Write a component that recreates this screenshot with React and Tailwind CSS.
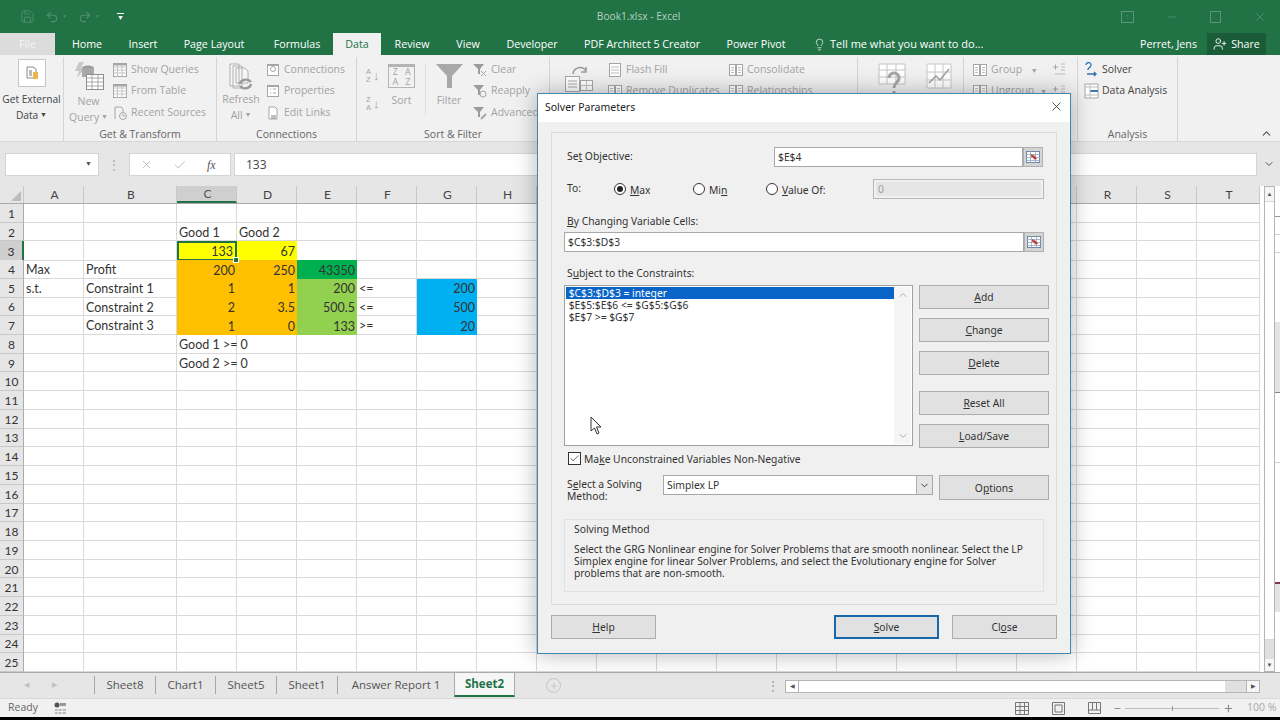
import React from "react";
import { Save, Undo2, Redo2, Lightbulb, X, Check, UserPlus, ChevronUp, ChevronDown, Plus, Minus } from "lucide-react";

const colWidths = "grid-cols-[24px_60px_93px_60px_60px_60px_60px_60px_60px_60px_60px_60px_60px_60px_60px_60px_60px_60px_60px_60px_63px]";
const colNames = ["A", "B", "C", "D", "E", "F", "G", "H", "I", "J", "K", "L", "M", "N", "O", "P", "Q", "R", "S", "T"];
const rowNums = Array.from({ length: 25 }, (_, i) => i + 1);

// row -> col -> [text, align, fill]
const cells = {
    2: { C: ["Good 1"], D: ["Good 2"] },
    3: { C: ["133", "r", "bg-[#ffff00]"], D: ["67", "r", "bg-[#ffff00]"] },
    4: { A: ["Max"], B: ["Profit"], C: ["200", "r", "bg-[#ffc000]"], D: ["250", "r", "bg-[#ffc000]"], E: ["43350", "r", "bg-[#00b050]"] },
    5: { A: ["s.t."], B: ["Constraint 1"], C: ["1", "r", "bg-[#ffc000]"], D: ["1", "r", "bg-[#ffc000]"], E: ["200", "r", "bg-[#92d050]"], F: ["<="], G: ["200", "r", "bg-[#00b0f0]"] },
    6: { B: ["Constraint 2"], C: ["2", "r", "bg-[#ffc000]"], D: ["3.5", "r", "bg-[#ffc000]"], E: ["500.5", "r", "bg-[#92d050]"], F: ["<="], G: ["500", "r", "bg-[#00b0f0]"] },
    7: { B: ["Constraint 3"], C: ["1", "r", "bg-[#ffc000]"], D: ["0", "r", "bg-[#ffc000]"], E: ["133", "r", "bg-[#92d050]"], F: [">="], G: ["20", "r", "bg-[#00b0f0]"] },
    8: { C: ["Good 1 >= 0"] },
    9: { C: ["Good 2 >= 0"] },
};

const tabs = [
    ["Home", "w-[64px]"],
    ["Insert", "w-[48px]"],
    ["Page Layout", "w-[94px]"],
    ["Formulas", "w-[72px]"],
    ["Data", "w-[48px]"],
    ["Review", "w-[62px]"],
    ["View", "w-[50px]"],
    ["Developer", "w-[78px]"],
    ["PDF Architect 5 Creator", "w-[142px]"],
    ["Power Pivot", "w-[86px]"],
];

const sheetTabs = [
    ["Sheet8", "w-[61px]"],
    ["Chart1", "w-[60px]"],
    ["Sheet5", "w-[61px]"],
    ["Sheet1", "w-[61px]"],
    ["Answer Report 1", "w-[117px]"],
];

function Ico({ w = 16, h = 16, vb, children, className = "" }) {
    return (
        <svg width={w} height={h} viewBox={vb || `0 0 ${w} ${h}`} fill="none" stroke="#a6a6a6" strokeWidth="1" className={`shrink-0 ${className}`}>
            {children}
        </svg>
    );
}

const TableIco = () => (
    <Ico>
        <rect x="1.5" y="1.5" width="13" height="13" fill="#fff" />
        <path d="M1.5 5h13M1.5 8h13M1.5 11h13M5.5 2v13M10 2v13" stroke="#c4c4c4" />
        <path d="M1.5 2.5h13" strokeWidth="2" />
    </Ico>
);
const ClockIco = () => (
    <Ico>
        <path d="M3 14V2h6l2 2v3" />
        <circle cx="11" cy="11" r="3.5" fill="#f1f1f1" />
        <path d="M11 9v2h2" />
    </Ico>
);
const PageIco = ({ dots }) => (
    <Ico>
        <rect x="2.5" y="2.5" width="11" height="11" fill="#fff" />
        {dots ? <path d="M5 6h1M8 6h3M5 10h1M8 10h3" /> : <circle cx="8" cy="7" r="2.5" />}
        <path d="M2.5 3.5h11" />
    </Ico>
);
const LinkIco = () => (
    <Ico>
        <path d="M4 14V2h6l2 2v10z" fill="#fff" />
        <path d="M6 11h5M6 13h5" strokeWidth="1.4" />
    </Ico>
);
const FunnelSmall = ({ children }) => (
    <Ico>
        <path d="M1 2h11L8 7v5H6V7z" fill="#9c9c9c" stroke="none" />
        {children}
    </Ico>
);
const SmallDoc = () => (
    <Ico>
        <rect x="2.5" y="1.5" width="11" height="13" fill="#fff" />
        <path d="M4 5h8M4 8h8M4 11h8" stroke="#bdbdbd" />
    </Ico>
);
const SplitIco = () => (
    <Ico>
        <rect x="1.500" y="2.500" width="6" height="11" fill="#fff" />
        <rect x="8.500" y="2.500" width="6" height="11" fill="#fff" />
        <path d="M3 5.500h3M3 8h3M3 10.500h3M10 5.500h3M10 8h3M10 10.500h3" stroke="#bdbdbd" />
    </Ico>
);
const OutlineSide = () => (
    <Ico>
        <path d="M2 5h5M4.500 2.500v5" />
        <path d="M10 2h4M10 5h4M10 8h4M4 12h10" stroke="#bdbdbd" />
    </Ico>
);

function SmallItem({ icon, children, className = "" }) {
    return (
        <div className={`h-[21.5px] flex items-center gap-[3px] whitespace-nowrap text-[#a3a3a3] ${className}`}>
            {icon}
            <span>{children}</span>
        </div>
    );
}

function BigLabel({ a, b, caret, dark }) {
    return (
        <div className={`text-center leading-[15px] ${dark ? "text-[#444444] text-[10.2px]" : "text-[#a3a3a3]"}`}>
            <div>{a}</div>
            <div>{b}{caret && <span className="text-[7px] align-[2px]"> ▼</span>}</div>
        </div>
    );
}

function Group({ width, label, children, noBorder }) {
    return (
        <div className={`${width} h-[85px] mt-[2px] shrink-0 flex flex-col ${noBorder ? "" : "border-r border-[#d4d4d4]"}`}>
            <div className="flex-1 flex min-h-0">{children}</div>
            {label && <div className="text-center text-[#666666] text-[10.5px] leading-[14px] pb-[1px]">{label}</div>}
        </div>
    );
}

function Ribbon() {
    return (
        <div className="h-[87px] shrink-0 bg-[#f1f1f1] border-b border-[#d8d8d8] flex text-[10.5px] font-['Open_Sans',sans-serif] relative">
            <Group width="w-[64px]">
                <div className="w-full flex flex-col items-center pt-[2px]">
                    <div className="w-[28px] h-[28px] bg-white border border-[#c6c6c6] flex items-center justify-center">
                        <svg width="16" height="16" viewBox="0 0 16 16">
                            <path d="M3 2h6l3 2v9H3z" fill="#fff" stroke="#8a8a8a" />
                            <path d="M5 6h3M5 8h3M5 10h3" stroke="#777" />
                            <rect x="9" y="7" width="5" height="7" fill="#e8b64c" />
                        </svg>
                    </div>
                    <div className="mt-[5px]"><BigLabel a="Get External" b="Data" caret dark /></div>
                </div>
            </Group>

            <Group width="w-[153px]" label="Get & Transform">
                <div className="w-[49px] flex flex-col items-center pt-[4px]">
                    <svg width="30" height="30" viewBox="0 0 30 30">
                        <path d="M5 1L1 10h4l-2 7 8-10H7l3-6z" fill="#c8c8c8" />
                        <ellipse cx="14" cy="7" rx="6" ry="2.5" fill="#9a9a9a" />
                        <rect x="8" y="7" width="12" height="9" fill="#a8a8a8" />
                        <rect x="12.5" y="13.5" width="17" height="15" fill="#fff" stroke="#8f8f8f" />
                        <path d="M13 17h16M13 21h16M13 25h16M18 14v14M24 14v14" stroke="#a8a8a8" />
                    </svg>
                    <div className="mt-[3px]"><BigLabel a="New" b="Query" caret /></div>
                </div>
                <div className="pt-[2px] -ml-[1px]">
                    <SmallItem icon={<TableIco />}>Show Queries</SmallItem>
                    <SmallItem icon={<TableIco />}>From Table</SmallItem>
                    <SmallItem icon={<ClockIco />}>Recent Sources</SmallItem>
                </div>
            </Group>

            <Group width="w-[140px]" label="Connections">
                <div className="w-[48px] flex flex-col items-center pt-[6px]">
                    <svg width="24" height="28" viewBox="0 0 24 28">
                        <path d="M1 1h9v22H1zM4 3h9v22H4zM7 5h9l3 3v12H7z" fill="#f6f6f6" stroke="#b0b0b0" />
                        <path d="M11 21a6 5 0 0 1 11-2M22 21a6 5 0 0 1-11 2" stroke="#9a9a9a" strokeWidth="2.4" fill="none" />
                    </svg>
                    <div className="mt-[1px]"><BigLabel a="Refresh" b="All" caret /></div>
                </div>
                <div className="pt-[2px]">
                    <SmallItem icon={<PageIco />}>Connections</SmallItem>
                    <SmallItem icon={<PageIco dots />}>Properties</SmallItem>
                    <SmallItem icon={<LinkIco />}>Edit Links</SmallItem>
                </div>
            </Group>

            <Group width="w-[193px]" label="Sort & Filter">
                <div className="w-[68px] flex">
                    <div className="w-[31px] pl-[9px] pt-[10px] flex flex-col gap-[12px] text-[8px] leading-[8px] text-[#a3a3a3]">
                        <div className="flex items-center gap-[2px]"><div><div>A</div><div>Z</div></div><span className="text-[13px] leading-[16px]">↓</span></div>
                        <div className="flex items-center gap-[2px]"><div><div>Z</div><div>A</div></div><span className="text-[13px] leading-[16px]">↓</span></div>
                    </div>
                    <div className="flex flex-col items-center pt-[7px]">
                        <div className="w-[27px] h-[24px] border border-[#b4b4b4] border-t-[3px] grid grid-cols-2 text-[9px] leading-[10px] text-center text-[#a3a3a3]">
                            <span>Z</span><span>A</span><span>A</span><span>Z</span>
                        </div>
                        <div className="mt-[5px] text-[#a3a3a3]">Sort</div>
                    </div>
                </div>
                <div className="w-px h-[52px] mt-[7px] bg-[#e0e0e0]" />
                <div className="w-[46px] flex flex-col items-center pt-[6px]">
                    <svg width="27" height="26" viewBox="0 0 27 26">
                        <path d="M0 1h27L16 13v12h-5V13z" fill="#a8a8a8" />
                    </svg>
                    <div className="mt-[4px] text-[#a3a3a3]">Filter</div>
                </div>
                <div className="pt-[2px]">
                    <SmallItem icon={<FunnelSmall><path d="M9 9l5 5M14 9l-5 5" /></FunnelSmall>}>Clear</SmallItem>
                    <SmallItem icon={<FunnelSmall><circle cx="11" cy="11" r="3" /></FunnelSmall>}>Reapply</SmallItem>
                    <SmallItem icon={<FunnelSmall><path d="M9 14l5-5" strokeWidth="2" /></FunnelSmall>}>Advanced</SmallItem>
                </div>
            </Group>

            <Group width="w-[308px]">
                <div className="w-[57px] flex justify-center pt-[6px]">
                    <svg width="30" height="30" viewBox="0 0 30 30" fill="none" stroke="#a8a8a8">
                        <path d="M9 11a7 7 0 0 1 13-3M22 4v5h-5" strokeWidth="1.6" stroke="#9c9c9c" />
                        <rect x="1.500" y="13.500" width="14" height="15" fill="#fff" />
                        <path d="M4 18h9M4 21h9M4 24h9" />
                        <rect x="16.500" y="17.500" width="12" height="10" fill="#fff" />
                        <path d="M16.500 22.500h12M22.500 18v10" stroke="#c0c0c0" />
                    </svg>
                </div>
                <div className="w-[121px] pt-[2px]">
                    <SmallItem icon={<SmallDoc />}>Flash Fill</SmallItem>
                    <SmallItem icon={<SplitIco />}>Remove Duplicates</SmallItem>
                </div>
                <div className="pt-[2px]">
                    <SmallItem icon={<SplitIco />}>Consolidate</SmallItem>
                    <SmallItem icon={<SplitIco />}>Relationships</SmallItem>
                </div>
            </Group>

            <Group width="w-[106px]">
                <div className="flex pl-[20px] gap-[20px] pt-[6px]">
                    <svg width="28" height="34" viewBox="0 0 28 34">
                        <path d="M1 1h26v20H1zM1 7h26M1 14h26M9 1v20M18 1v20" stroke="#c4c4c4" fill="#fff" />
                        <path d="M11 15a5 5 0 1 1 8 4c-2 2-3 3-3 6" stroke="#a6a6a6" strokeWidth="3" fill="none" />
                        <path d="M16 28v4" stroke="#a6a6a6" strokeWidth="3" />
                    </svg>
                    <svg width="26" height="26" viewBox="0 0 26 26">
                        <path d="M1 1h24v24H1zM1 9h24M1 17h24M9 1v24M17 1v24" stroke="#c8c8c8" fill="#fff" />
                        <path d="M3 20l7-7 4 4 9-11" stroke="#a0a0a0" strokeWidth="1.5" fill="none" />
                    </svg>
                </div>
            </Group>

            <Group width="w-[114px]">
                <div className="w-[80px] pl-[8px] pt-[2px]">
                    <SmallItem icon={<SplitIco />}>Group <span className="text-[7px] pl-[6px]">▼</span></SmallItem>
                    <SmallItem icon={<SplitIco />}>Ungroup <span className="text-[7px] pl-[3px]">▼</span></SmallItem>
                </div>
                <div className="pl-[7px] pt-[5px] flex flex-col gap-[6px]">
                    <OutlineSide />
                    <OutlineSide />
                </div>
            </Group>

            <Group width="w-[100px]" label="Analysis">
                <div className="pl-[6px] pt-[2px] text-[#444444]">
                    <SmallItem className="!text-[#444444]" icon={
                        <svg width="15" height="15" viewBox="0 0 15 15" fill="none" stroke="#2f6fb5" strokeWidth="1.3">
                            <path d="M2 3a2.5 2.5 0 1 1 4 2L4 7v1" />
                            <path d="M3 12h9M10 10l2 2-2 2" />
                        </svg>
                    }>Solver</SmallItem>
                    <SmallItem className="!text-[#444444]" icon={
                        <svg width="15" height="16" viewBox="0 0 15 16">
                            <rect x="1" y="1" width="13" height="14" fill="#fff" stroke="#a8a8a8" />
                            <path d="M6 7h8v2H6z" fill="#3f78ae" />
                            <path d="M1 4h13M1 12h13M6 1v14" stroke="#c0c0c0" />
                        </svg>
                    }>Data Analysis</SmallItem>
                </div>
            </Group>

            <div className="flex-1 flex justify-end items-end pb-[1px] pr-[7px]">
                <ChevronUp size={13} strokeWidth={2} className="text-[#555555]" />
            </div>
        </div>
    );
}

function FormulaBar() {
    return (
        <div className="h-[44px] shrink-0 bg-[#e6e6e6] flex items-start pt-[11px] pl-[5px] font-['Open_Sans',sans-serif]">
            <div className="w-[94px] h-[23px] bg-white border border-[#d4d4d4] flex items-center justify-end pr-[6px]">
                <span className="text-[7px] text-[#555555]">▼</span>
            </div>
            <div className="w-[30px] h-[23px] flex items-center justify-center text-[#aaaaaa] text-[12px]">⋮</div>
            <div className="w-[102px] h-[23px] bg-white border border-[#d4d4d4] flex items-center pl-[10px] text-[#b4b4b4]">
                <X size={13} strokeWidth={1.5} />
                <Check size={14} strokeWidth={1.5} className="ml-[20px]" />
                <span className="ml-[20px] text-[12px] italic text-[#555555] font-['Liberation_Serif',serif]">fx</span>
            </div>
            <div className="ml-[3px] w-[1023px] h-[23px] bg-white border border-[#d4d4d4] flex items-center pl-[11px] text-[12px] text-[#444444]">133</div>
            <div className="flex-1 flex justify-center pt-[5px]">
                <ChevronDown size={12} strokeWidth={2} className="text-[#555555]" />
            </div>
        </div>
    );
}

function Sheet() {
    return (
        <div className="flex h-[486px] shrink-0 bg-white">
            <div className="w-[1260px] border-r border-[#b5b5b5] font-['Lato',sans-serif] text-[12.5px] text-[#333333]">
                <div className={`grid ${colWidths} h-[18px] bg-[#e6e6e6] border-b border-[#ababab]`}>
                    <div className="border-r border-[#c8c8c8] relative overflow-hidden">
                        <div className="absolute right-[2px] bottom-[2px] w-0 h-0 border-l-[10px] border-l-transparent border-b-[10px] border-b-[#bcbcbc]" />
                    </div>
                    {colNames.map((c) => (
                        <div
                            key={c}
                            className={`flex items-center justify-center pl-[2px] pt-[1px] text-[12px] leading-none border-r border-[#c8c8c8] ${c === "C" ? "bg-[#cfcfcf] border-b-2 border-b-[#217346] text-[#555555]" : "text-[#444444]"}`}
                        >
                            {c}
                        </div>
                    ))}
                </div>
                {rowNums.map((r) => (
                    <div key={r} className={`grid ${colWidths} h-[18.72px]`}>
                        <div className={`flex items-center justify-center pt-[2px] text-[12px] leading-none border-b border-[#c8c8c8] ${r === 3 ? "bg-[#cfcfcf] border-r-2 border-r-[#217346]" : "bg-[#e6e6e6] border-r border-r-[#ababab]"}`}>
                            {r}
                        </div>
                        {colNames.map((c) => {
                            const cell = cells[r] && cells[r][c];
                            const selected = r === 3 && c === "C";
                            return (
                                <div
                                    key={c}
                                    className={`relative flex items-center whitespace-nowrap leading-none px-[2px] pt-[3px] ${cell && cell[2] ? cell[2] : "border-r border-b border-[#d9d9d9]"} ${cell && cell[1] === "r" ? "justify-end" : ""} ${selected ? "border-2 border-[#217346]" : ""}`}
                                >
                                    {cell && cell[0]}
                                    {selected && <span className="absolute -right-[4px] -bottom-[4px] w-[6px] h-[6px] bg-[#217346] border border-white z-10" />}
                                </div>
                            );
                        })}
                    </div>
                ))}
            </div>

            <div className="w-[4px]" />
            <div className="w-[11px] flex flex-col border border-[#b5b5b5]">
                <div className="h-[14px] flex items-center justify-center text-[6px] text-[#555555] bg-[#f6f6f6]">▲</div>
                <div className="h-[439px] bg-white border-y border-[#d8d8d8]" />
                <div className="flex-1 bg-[#e0e0e0]" />
                <div className="h-[12px] flex items-center justify-center text-[6px] text-[#555555] bg-[#f6f6f6]">▼</div>
            </div>
            {/* window behind, only a sliver of it shows */}
            <div className="w-[5px] flex flex-col pt-[30px]">
                <div className="h-[18px] border-t border-[#999999]" />
                <div className="h-[18px] border-t border-[#d0d0d0]" />
                <div className="h-[70px] border-t border-[#d0d0d0]" />
                <div className="h-[70px] bg-[#e4e4e4]" />
                <div className="h-[70px] border-t border-[#888888]" />
                <div className="h-[120px] border-t border-[#d0d0d0]" />
                <div className="h-[30px] border-t-2 border-[#7a3b45] bg-[#e4e4e4]" />
            </div>
        </div>
    );
}

function SheetTabs() {
    return (
        <div className="h-[26px] shrink-0 bg-[#e6e6e6] border-t border-[#ababab] flex font-['Open_Sans',sans-serif] text-[11.5px] text-[#555555]">
            <div className="w-[94px] flex items-center pl-[24px] gap-[23px] text-[7px] text-[#c0c0c0]">
                <span>◀</span><span>▶</span>
            </div>
            {sheetTabs.map(([t, w]) => (
                <div key={t} className={`${w} h-[18px] mt-[3px] border-l border-[#a8a8a8] flex items-center justify-center`}>{t}</div>
            ))}
            <div className="w-[61px] h-[24px] bg-[#f6f6f6] border-x border-[#ababab] border-b-2 border-b-[#217346] flex items-center justify-center font-bold text-[#217346]">Sheet2</div>
            <div className="w-[270px] flex items-center pl-[31px]">
                <div className="w-[15px] h-[15px] rounded-full border border-[#c4c4c4] flex items-center justify-center text-[#c4c4c4] shrink-0">
                    <Plus size={10} strokeWidth={2} />
                </div>
                <span className="ml-[206px] text-[#999999] text-[12px]">⋮</span>
            </div>
            <div className="w-[475px] h-[13px] mt-[7px] flex border border-[#b5b5b5] bg-white">
                <div className="w-[13px] border-r border-[#b5b5b5] flex items-center justify-center text-[6px] text-[#555555]">◀</div>
                <div className="flex-1" />
                <div className="w-[21px] bg-[#e0e0e0]" />
                <div className="w-[13px] border-l border-[#b5b5b5] bg-[#f6f6f6] flex items-center justify-center text-[6px] text-[#555555]">▶</div>
            </div>
        </div>
    );
}

function StatusBar() {
    return (
        <div className="h-[19px] shrink-0 bg-[#f1f1f1] border-t border-[#d8d8d8] flex items-center font-['Open_Sans',sans-serif] text-[10.5px] text-[#666666]">
            <span className="pl-[8px] w-[54px]">Ready</span>
            <svg width="13" height="13" viewBox="0 0 13 13">
                <circle cx="3" cy="3" r="2.5" fill="#555" />
                <rect x="6" y="1" width="6" height="3" fill="#999" />
                <path d="M1 7h11v5H1z" fill="#bbb" />
                <path d="M4 7v5M8 7v5M1 9.5h11" stroke="#f1f1f1" />
            </svg>
            <div className="ml-[948px] flex items-center gap-[23px] text-[#777777]">
                <svg width="14" height="13" viewBox="0 0 14 13" fill="none" stroke="#777"><path d="M.5.5h13v12H.5zM.5 4.5h13M.5 8.5h13M5 .5v12M9.500 .5v12" /></svg>
                <svg width="13" height="13" viewBox="0 0 13 13" fill="none" stroke="#777"><path d="M.5.5h12v12H.5zM3 3h7v7H3z" /></svg>
                <svg width="13" height="12" viewBox="0 0 13 12" fill="none" stroke="#777"><path d="M.5.5h12v11H.5zM.5 8h12M4.500 .5V8M8.500 .5V8" /></svg>
            </div>
            <div className="ml-[12px] flex items-center text-[#8a8a8a]">
                <Minus size={9} strokeWidth={2.5} />
                <div className="w-[94px] h-px bg-[#bdbdbd] ml-[3px] mr-[4px] flex justify-center"><span className="w-px h-[5px] -mt-[2px] bg-[#999999]" /></div>
                <Plus size={11} strokeWidth={2.5} />
            </div>
            <span className="ml-[13px] text-[#a8a8a8] whitespace-nowrap">100 %</span>
        </div>
    );
}

function RefPicker() {
    return (
        <div className="w-[20px] h-[20px] bg-[#d4d4d4] border border-[#b0b0b0] flex items-center justify-center shrink-0">
            <svg width="14" height="12" viewBox="0 0 14 12">
                <rect x=".5" y=".5" width="13" height="11" fill="#fff" stroke="#6f86a6" />
                <path d="M0 3.500h14M0 6.500h14M0 9.500h14M4.500 0v12M9.500 0v12" stroke="#8fa6c4" strokeWidth=".8" />
                <path d="M5 3l4 2 2 3-3 .5-1-2-2-1z" fill="#c4402e" />
            </svg>
        </div>
    );
}

function Radio({ on }) {
    return (
        <span className="w-[12px] h-[12px] rounded-full bg-white border border-[#333333] flex items-center justify-center shrink-0">
            {on && <span className="w-[6px] h-[6px] rounded-full bg-[#222222]" />}
        </span>
    );
}

function DlgButton({ width, className = "", children }) {
    return (
        <div className={`${width} h-[24px] bg-[#e1e1e1] border border-[#adadad] flex items-center justify-center shrink-0 ${className}`}>
            {children}
        </div>
    );
}

function SolverDialog() {
    return (
        <div className="absolute left-[537px] top-[93px] w-[534px] h-[561px] bg-[#f0f0f0] border border-[#3f87b5] shadow-[0_0_22px_rgba(0,0,0,0.3)] font-['Noto_Sans',sans-serif] text-[10.3px] leading-[14px] text-[#333333] z-20">
            <div className="h-[28px] bg-white flex items-center justify-between pl-[7px] pr-[6px] pb-[3px] text-[10.5px] text-[#222222]">
                <span>Solver Parameters</span>
                <X size={15} strokeWidth={1.2} />
            </div>

            <div className="mx-[13px] mt-[10px] h-[473px] border border-[#dcdcdc] pl-[12px] pr-[6px]">
                <div className="flex items-start pt-[14px] h-[34px]">
                    <span className="w-[210px] pl-[3px] pt-[2px]">Se<u>t</u> Objective:</span>
                    <div className="w-[249px] h-[20px] bg-white border border-[#a8a8a8] flex items-center pl-[3px]">$E$4</div>
                    <RefPicker />
                </div>

                <div className="flex items-center h-[20px] mt-[12px]">
                    <span className="w-[50px] pl-[3px] -mt-[2px]">To:</span>
                    <Radio on />
                    <span className="ml-[4px] w-[63px] pt-[1px]"><u>M</u>ax</span>
                    <Radio />
                    <span className="ml-[4px] w-[57px] pt-[1px]">Mi<u>n</u></span>
                    <Radio />
                    <span className="ml-[4px] w-[91px] pt-[1px]"><u>V</u>alue Of:</span>
                    <div className="w-[171px] h-[20px] bg-[#f0f0f0] border border-[#b8b8b8] p-[2px]">
                        <div className="h-full bg-[#e6e6e6] pl-[2px] text-[#a0a0a0] flex items-center">0</div>
                    </div>
                </div>

                <div className="mt-[15px] pl-[3px]"><u>B</u>y Changing Variable Cells:</div>
                <div className="flex mt-[4px]">
                    <div className="w-[460px] h-[20px] bg-white border border-[#a8a8a8] flex items-center pl-[3px]">$C$3:$D$3</div>
                    <RefPicker />
                </div>

                <div className="mt-[14px] pl-[3px]">S<u>u</u>bject to the Constraints:</div>
                <div className="flex mt-[5px] h-[163px]">
                    <div className="w-[349px] h-[161px] bg-white border border-[#a0a0a0] flex p-[1px] relative">
                        <div className="flex-1 text-[#333333] leading-[12px]">
                            <div className="bg-[#0a64c8] text-white h-[12px] w-full">&nbsp;$C$3:$D$3 = integer</div>
                            <div>&nbsp;$E$5:$E$6 &lt;= $G$5:$G$6</div>
                            <div>&nbsp;$E$7 &gt;= $G$7</div>
                        </div>
                        <div className="w-[17px] bg-[#f5f5f5] flex flex-col justify-between items-center py-[2px] text-[#b0b0b0]">
                            <ChevronUp size={12} />
                            <ChevronDown size={12} />
                        </div>
                        {/* mouse pointer */}
                        <svg className="absolute left-[25px] top-[130px]" width="13" height="20" viewBox="0 0 13 20">
                            <path d="M1 1v14l3.500-3 2.500 6 2-1-2.500-6H11z" fill="#fff" stroke="#333" strokeWidth="1" />
                        </svg>
                    </div>
                    <div className="ml-[6px] flex flex-col">
                        <DlgButton width="w-[130px]"><span><u>A</u>dd</span></DlgButton>
                        <DlgButton width="w-[130px]" className="mt-[9px]"><span><u>C</u>hange</span></DlgButton>
                        <DlgButton width="w-[130px]" className="mt-[9px]"><span><u>D</u>elete</span></DlgButton>
                        <DlgButton width="w-[130px]" className="mt-[16px]"><span><u>R</u>eset All</span></DlgButton>
                        <DlgButton width="w-[130px]" className="mt-[9px]"><span><u>L</u>oad/Save</span></DlgButton>
                    </div>
                </div>

                <div className="flex items-center mt-[4px] h-[13px] pl-[4px]">
                    <span className="w-[13px] h-[13px] bg-white border border-[#333333] flex items-center justify-center shrink-0">
                        <Check size={11} strokeWidth={1.6} />
                    </span>
                    <span className="ml-[3px]">Ma<u>k</u>e Unconstrained Variables Non-Negative</span>
                </div>

                <div className="flex mt-[10px] h-[25px]">
                    <span className="w-[99px] pl-[3px] leading-[12px] pt-[3px]">S<u>e</u>lect a Solving<br />Method:</span>
                    <div className="w-[270px] h-[20px] bg-white border border-[#a8a8a8] flex items-center pl-[3px] justify-between">
                        <span>Simplex LP</span>
                        <div className="w-[16px] h-full bg-[#e4e4e4] border-l border-[#b0b0b0] flex items-center justify-center">
                            <ChevronDown size={11} />
                        </div>
                    </div>
                    <DlgButton width="w-[110px] !h-[25px]" className="ml-[6px]"><span>O<u>p</u>tions</span></DlgButton>
                </div>

                <div className="w-[480px] h-[73px] mt-[19px] border border-[#e2e2e2] pl-[9px] pt-[2px]">
                    <div>Solving Method</div>
                    <div className="mt-[7px] leading-[12px] text-[10.28px] whitespace-nowrap">
                        Select the GRG Nonlinear engine for Solver Problems that are smooth nonlinear. Select the LP<br />
                        Simplex engine for linear Solver Problems, and select the Evolutionary engine for Solver<br />
                        problems that are non-smooth.
                    </div>
                </div>
            </div>

            <div className="flex mx-[13px] mt-[10px]">
                <DlgButton width="w-[105px]"><span><u>H</u>elp</span></DlgButton>
                <DlgButton width="w-[105px]" className="ml-[178px] !border-2 !border-[#1668aa]"><span><u>S</u>olve</span></DlgButton>
                <DlgButton width="w-[105px]" className="ml-[13px]"><span>Cl<u>o</u>se</span></DlgButton>
            </div>
        </div>
    );
}

export default function App() {
    return (
        <div className="relative w-[1280px] h-[720px] overflow-hidden bg-black flex flex-col">
            <div className="h-[33px] bg-[#217346] flex items-center relative font-['Open_Sans',sans-serif] shrink-0">
                <div className="flex items-center pl-[20px] text-[#4f8f6c]">
                    <Save size={15} strokeWidth={1.5} />
                    <Undo2 size={14} strokeWidth={2} className="ml-[10px]" />
                    <span className="text-[5px] ml-[3px]">▼</span>
                    <Redo2 size={14} strokeWidth={2} className="ml-[11px]" />
                    <span className="text-[5px] ml-[3px]">▼</span>
                    <span className="text-[7px] text-white ml-[17px] border-t border-white leading-[7px]">▼</span>
                </div>
                <span className="ml-[473px] text-[10.2px] text-[#b5d1c1]">Book1.xlsx - Excel</span>
                <div className="ml-auto flex items-center text-[#5a9677] pr-[13px] gap-[32px]">
                    <div className="w-[13px] h-[12px] border border-[#5a9677] flex items-center justify-center text-[7px] leading-none">↑</div>
                    <Minus size={12} strokeWidth={1.5} />
                    <div className="w-[11px] h-[12px] border border-[#5a9677]" />
                    <X size={14} strokeWidth={1.2} />
                </div>
            </div>

            <div className="h-[22px] bg-[#217346] flex text-[10.7px] text-white font-['Open_Sans',sans-serif] shrink-0">
                <div className="w-[55px] bg-[#dcdcdc] text-[#f5f5f5] flex items-center justify-center">File</div>
                {tabs.map(([t, w]) => (
                    <div key={t} className={`${w} flex items-center justify-center whitespace-nowrap ${t === "Data" ? "bg-[#f1f1f1] text-[#217346]" : ""}`}>{t}</div>
                ))}
                <div className="flex items-center pl-[14px] gap-[4px] whitespace-nowrap">
                    <Lightbulb size={13} strokeWidth={1.3} />
                    <span className="text-[11px]">Tell me what you want to do...</span>
                </div>
                <div className="ml-auto flex items-center pr-[14px]">
                    <span className="mr-[10px] whitespace-nowrap">Perret, Jens</span>
                    <div className="w-[59px] h-[22px] bg-[#1a5c38] flex items-center justify-center gap-[4px]">
                        <UserPlus size={14} strokeWidth={1.5} />
                        <span>Share</span>
                    </div>
                </div>
            </div>

            <Ribbon />
            <FormulaBar />
            <Sheet />
            <SheetTabs />
            <StatusBar />
            <SolverDialog />
        </div>
    );
}
